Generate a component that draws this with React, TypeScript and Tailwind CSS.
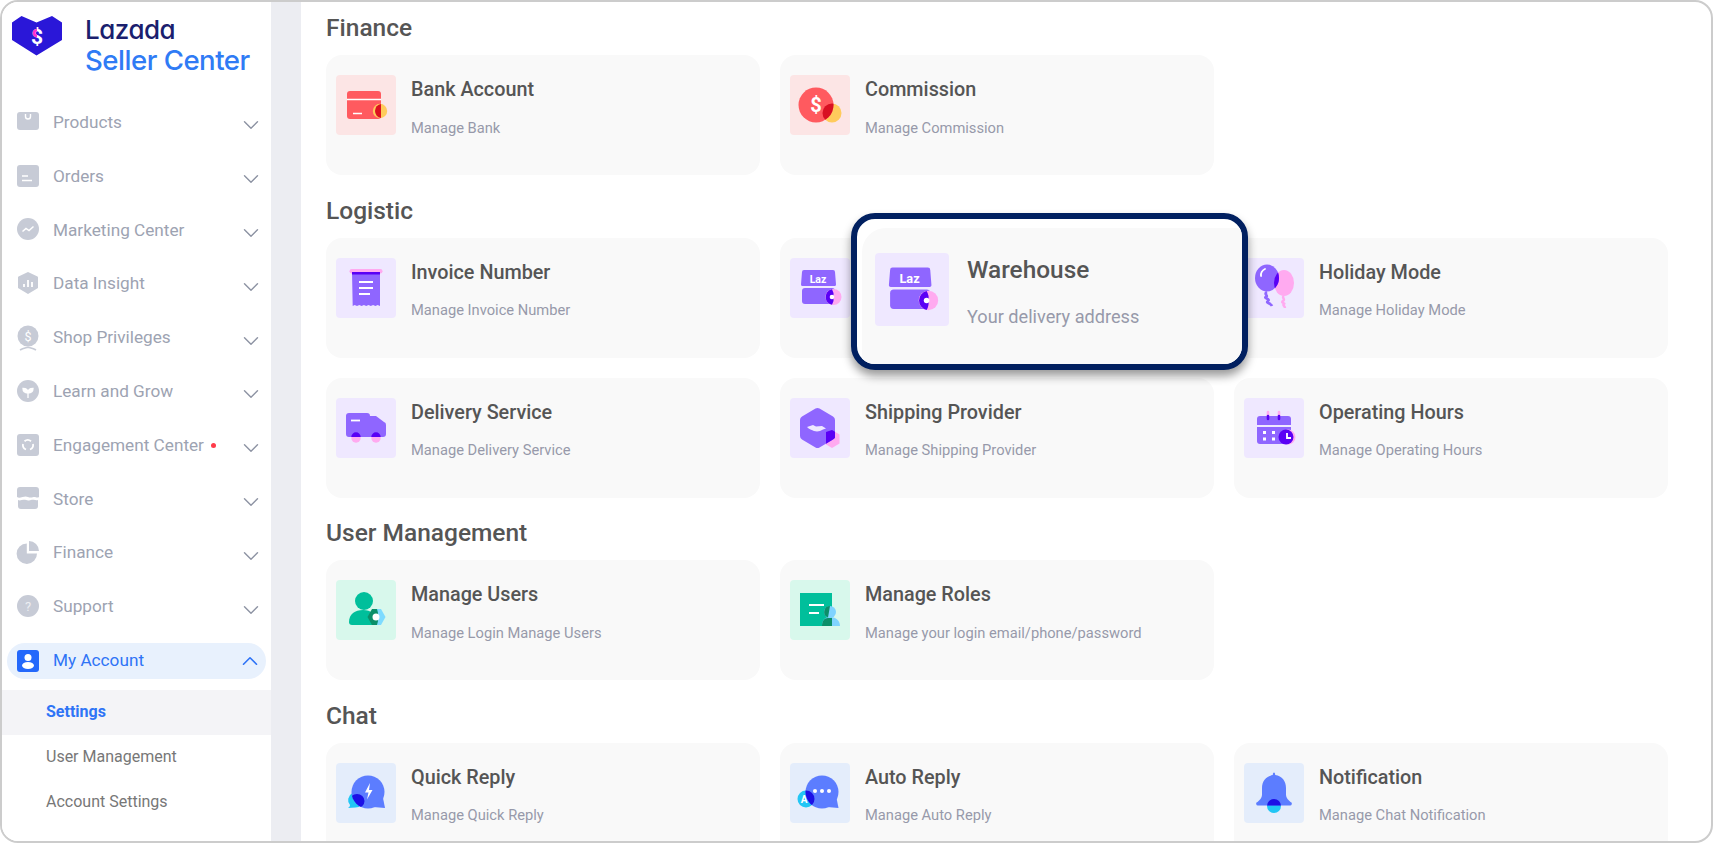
import React from 'react';
import { ChevronDown, ChevronUp } from 'lucide-react';

const PURPLE = '#8f66ff';
const PINK = '#ffaaf0';
const DEEP = '#5a00f5';
const BLUE = '#5c7dff';
const CYAN = '#22c6f5';
const NAVY = '#1c10e6';
const GREEN = '#00bf9b';

/* ---------- sidebar icons ---------- */
const GRAY = '#c7cbd6';

const navIcons: Record<string, React.ReactNode> = {
  products: (
    <>
      <rect x="0" y="1" width="22" height="18" rx="3" fill={GRAY} />
      <path d="M8.500 3v2.500a2.500 2.500 0 0 0 5 0V3" fill="none" stroke="#fff" strokeWidth="1.400" />
    </>
  ),
  orders: (
    <>
      <rect x="0" y="0" width="22" height="22" rx="3" fill={GRAY} />
      <path d="M5 11h6M5 15.500h10" stroke="#fff" strokeWidth="1.600" />
    </>
  ),
  marketing: (
    <>
      <circle cx="11" cy="11" r="11" fill={GRAY} />
      <path d="M5.500 13.500l3.500-3 3 2 4.500-4" fill="none" stroke="#fff" strokeWidth="1.500" />
    </>
  ),
  data: (
    <>
      <path d="M11 0l9.500 4.500a1 1 0 0 1 .5 1V16l-10 6-10-6V5.500a1 1 0 0 1 .5-1z" fill={GRAY} />
      <path d="M7 15v-3M11 15V8M15 15v-5" stroke="#fff" strokeWidth="1.800" />
    </>
  ),
  shop: (
    <>
      <circle cx="11" cy="10" r="10.500" fill={GRAY} />
      <text x="11" y="14.500" textAnchor="middle" fontSize="12.500" fontFamily="Roboto, sans-serif" fill="#fff">$</text>
      <path d="M3 24c3-2 5-2 8-2.800 3 .8 5 .8 8 2.800" fill="none" stroke={GRAY} strokeWidth="1.600" />
    </>
  ),
  learn: (
    <>
      <circle cx="11" cy="11" r="11" fill={GRAY} />
      <path d="M11 18v-6M11 13c-3 0-5-1.500-5-4.500 3 0 5 1.500 5 4.500zM11 13c3 0 5-1.500 5-4.500-3 0-5 1.500-5 4.500z" fill="#fff" stroke="#fff" strokeWidth="1.300" />
    </>
  ),
  engagement: (
    <>
      <rect x="0" y="0" width="22" height="22" rx="3" fill={GRAY} />
      <path d="M14 7.200a5 5 0 0 0-6.500 0M6 10a5 5 0 0 0 3 5.500M13 15.500a5 5 0 0 0 3-5.500" fill="none" stroke="#fff" strokeWidth="1.800" />
    </>
  ),
  store: (
    <>
      <path d="M3 0h16a3 3 0 0 1 3 3v7c-2 1.500-3.500-.5-5.500 0s-3.500 1-5.500 0-3.500-.5-5.500 0S2 11.500 0 10V3a3 3 0 0 1 3-3z" fill={GRAY} />
      <path d="M1 13c2 1 3.500 0 5.500-.2s3.500 1 5.500.6 3-1 5-.6 2.500.6 4 .2v6a3 3 0 0 1-3 3H4a3 3 0 0 1-3-3z" fill={GRAY} />
    </>
  ),
  finance: (
    <>
      <path d="M9.800 2.500V12.500H20A10.200 10.200 0 1 1 9.800 2.500z" fill={GRAY} />
      <path d="M12 0a10 10 0 0 1 10 10H12z" fill={GRAY} />
    </>
  ),
  support: (
    <>
      <circle cx="11" cy="11" r="11" fill={GRAY} />
      <text x="11" y="15.500" textAnchor="middle" fontSize="13" fontFamily="Roboto, sans-serif" fill="#eceef2">?</text>
    </>
  ),
  account: (
    <>
      <rect x="0" y="0" width="22" height="22" rx="3" fill="#2468fb" />
      <circle cx="11" cy="7.500" r="3.500" fill="#fff" />
      <ellipse cx="11" cy="15.500" rx="6" ry="3.500" fill="#fff" />
    </>
  ),
};

/* ---------- tile icons, all drawn on a 60 x 60 tile ---------- */
const tileIcons: Record<string, React.ReactNode> = {
  bank: (
    <>
      <rect x="11" y="16" width="34" height="28" rx="3" fill="#ff5a5f" />
      <path d="M11 24.500h34M17 38.500h9" stroke="#fff" strokeWidth="1.500" />
      <circle cx="44" cy="36" r="7.200" fill="#ffcb5c" />
      <path d="M45 28.900a7.200 7.200 0 0 0 0 14.200z" fill="#dc1020" />
    </>
  ),
  commission: (
    <>
      <circle cx="42" cy="38" r="9.500" fill="#ffcb5c" />
      <circle cx="26" cy="30" r="17.500" fill="#ff5a5f" />
      <clipPath id="cm"><circle cx="26" cy="30" r="17.500" /></clipPath>
      <circle cx="42" cy="38" r="9.500" fill="#d81022" clipPath="url(#cm)" />
      <text x="26" y="37" textAnchor="middle" fontSize="20" fontWeight="700" fontFamily="Roboto, sans-serif" fill="#fff">$</text>
    </>
  ),
  invoice: (
    <>
      <rect x="13.500" y="11" width="33" height="4.500" rx="2.200" fill={PINK} />
      <path d="M16 14h28v34l-2.300-1-2.300 1-2.300-1-2.300 1-2.300-1-2.300 1-2.300-1-2.300 1-2.300-1-2.300 1-2.300-1-2 1z" fill={PURPLE} />
      <rect x="16" y="14" width="28" height="2.500" fill={DEEP} />
      <path d="M23 24h14M23 30h14M23 36h11" stroke="#fff" strokeWidth="1.800" />
    </>
  ),
  warehouse: (
    <>
      <path d="M14 12h29a2 2 0 0 1 2 2l1 12.500a1.500 1.500 0 0 1-1.500 1.500h-32a1.500 1.500 0 0 1-1.500-1.500L12 14a2 2 0 0 1 2-2z" fill={PURPLE} />
      <text x="28" y="25" textAnchor="middle" fontSize="10.500" fontWeight="700" fontFamily="Roboto, sans-serif" fill="#fff">Laz</text>
      <rect x="12" y="30" width="33" height="16" rx="3" fill={PURPLE} />
      <circle cx="43.500" cy="39" r="8" fill={PINK} />
      <path d="M42 31.200a8 8 0 0 0 0 15.600 11 11 0 0 0 1.500-7.800 11 11 0 0 0-1.500-7.800z" fill={DEEP} />
      <circle cx="42" cy="39" r="2.300" fill="#fff" />
    </>
  ),
  holiday: (
    <>
      <ellipse cx="40" cy="25" rx="10" ry="13" fill={PINK} />
      <path d="M40 38c-3 2 2 3-1 5s3 2 1 3 1 2 1 4" fill="none" stroke={PINK} strokeWidth="2.400" />
      <ellipse cx="23" cy="20" rx="12" ry="13.500" fill={PURPLE} />
      <clipPath id="hl"><ellipse cx="23" cy="20" rx="12" ry="13.500" /></clipPath>
      <ellipse cx="40" cy="25" rx="10" ry="13" fill={DEEP} clipPath="url(#hl)" />
      <path d="M23 34c-4 2 2 4-1 5s5 2 2 4 3 2 4 5" fill="none" stroke={PURPLE} strokeWidth="2.600" />
      <path d="M17 18a7 7 0 0 1 4-7" fill="none" stroke="#fff" strokeWidth="1.800" strokeLinecap="round" />
    </>
  ),
  delivery: (
    <>
      <circle cx="20" cy="40" r="4.700" fill={PINK} />
      <circle cx="40" cy="40" r="4.700" fill={PINK} />
      <path d="M13 15h18a3 3 0 0 1 3 3h6l8 6a3 3 0 0 1 2 3v9a3 3 0 0 1-3 3H13a3 3 0 0 1-3-3V18a3 3 0 0 1 3-3z" fill={PURPLE} />
      <path d="M15.300 39a4.700 4.700 0 0 1 9.400 0zM35.300 39a4.700 4.700 0 0 1 9.400 0z" fill={DEEP} />
      <path d="M15 22.500h9" stroke="#fff" strokeWidth="1.800" />
    </>
  ),
  shipping: (
    <>
      <path d="M42 32l7.500 4.500v9L42 50l-7.500-4.500v-9z" fill={PINK} />
      <path d="M25.500 10.500a4 4 0 0 1 4 0l13.500 8a4 4 0 0 1 2 3.500v16a4 4 0 0 1-2 3.500l-13.500 8a4 4 0 0 1-4 0l-13.500-8a4 4 0 0 1-2-3.500V22a4 4 0 0 1 2-3.500z" fill={PURPLE} />
      <path d="M36 34l6-2 3 1.800v6a4 4 0 0 1-2 1.700l-7 4.200z" fill={DEEP} />
      <path d="M17 29l6-2 3 1.500 6-.5 4 2.500-3 1c-3 2-6 2.500-9 1.500-2-1-5-1.500-7-4z" fill="#fff" opacity="0.85" />
    </>
  ),
  hours: (
    <>
      <path d="M13 27v-6a3 3 0 0 1 3-3h28a3 3 0 0 1 3 3v6z" fill={PURPLE} />
      <path d="M13 29h34v14a3 3 0 0 1-3 3H16a3 3 0 0 1-3-3z" fill={PURPLE} />
      <path d="M24 14v4M35 14v4" stroke={PINK} strokeWidth="2.600" strokeLinecap="round" />
      <path d="M24 18v3M35 18v3" stroke={DEEP} strokeWidth="2.600" strokeLinecap="round" />
      <path d="M19 33h3v3h-3zM28 33h3v3h-3zM19 39.500h3v3h-3zM28 39.500h3v3h-3z" fill="#fff" />
      <circle cx="44" cy="39" r="7.500" fill={PINK} />
      <circle cx="42" cy="39" r="7.500" fill={DEEP} />
      <path d="M43 35v5h4" fill="none" stroke="#fff" strokeWidth="1.800" />
    </>
  ),
  users: (
    <>
      <circle cx="28" cy="21" r="9" fill={GREEN} />
      <path d="M13 42c0-8 6-12 14-12s13 4 13 12a3 3 0 0 1-3 3H16a3 3 0 0 1-3-3z" fill={GREEN} />
      <path d="M45 29l4.500 8-4.500 8h-8v-16z" fill="#7edbff" />
      <path d="M41 29h-5l-4.500 8 4.500 8h5l1-4v-8z" fill="#0b8f69" />
      <circle cx="40" cy="37" r="3.500" fill="#fff" />
    </>
  ),
  roles: (
    <>
      <rect x="10" y="13" width="32" height="33" fill={GREEN} />
      <path d="M19 25h15M19 33h10" stroke="#fff" strokeWidth="2" />
      <circle cx="40" cy="32" r="6" fill="#7fd3ff" />
      <path d="M32 46c0-6 3-9 8-9s10 3 10 9z" fill="#7fd3ff" />
      <path d="M42 26.500v11.500h-4c-4 0-6 3-6 8h10zM40 26a6 6 0 0 0-2 11.600" fill="#0b8f69" />
    </>
  ),
  quick: (
    <>
      <path d="M12 45c2-1 2-3 2-3a7.500 7.500 0 1 1 5.500 2.500z" fill={CYAN} />
      <circle cx="32" cy="29" r="16.500" fill={BLUE} />
      <path d="M37 44l12 1-2-10z" fill={BLUE} />
      <clipPath id="qr"><circle cx="32" cy="29" r="16.500" /></clipPath>
      <ellipse cx="21" cy="38" rx="7.500" ry="7" fill={NAVY} clipPath="url(#qr)" />
      <path d="M34 20l-5 9.500h3.500l-1.500 7 5.500-9.500h-3.500z" fill="#fff" />
    </>
  ),
  auto: (
    <>
      <circle cx="16" cy="36" r="8.500" fill={CYAN} />
      <circle cx="32" cy="29" r="16.500" fill={BLUE} />
      <path d="M37 44l11.500 1-2-10z" fill={BLUE} />
      <clipPath id="ar"><circle cx="32" cy="29" r="16.500" /></clipPath>
      <circle cx="16" cy="36" r="8.500" fill={NAVY} clipPath="url(#ar)" />
      <circle cx="25" cy="28" r="2" fill="#fff" />
      <circle cx="32" cy="28" r="2" fill="#fff" />
      <circle cx="39" cy="28" r="2" fill="#fff" />
      <text x="14" y="40" textAnchor="middle" fontSize="10" fontWeight="700" fontFamily="Roboto, sans-serif" fill="#fff">A</text>
    </>
  ),
  bell: (
    <>
      <circle cx="30" cy="43" r="7" fill={CYAN} />
      <path d="M30 9.500c.8 0 1.200 1 1.200 2.500 7 1.200 10.800 6 10.800 13v7c0 3 2.500 5 4.500 7a1.800 1.800 0 0 1-1 3.500H14.500a1.800 1.800 0 0 1-1-3.500c2-2 4.500-4 4.500-7v-7c0-7 3.800-11.800 10.800-13 0-1.500 .4-2.500 1.200-2.500z" fill={BLUE} />
      <clipPath id="bl"><rect x="20" y="30" width="20" height="12.500" /></clipPath>
      <circle cx="30" cy="43" r="7" fill={NAVY} clipPath="url(#bl)" />
    </>
  ),
};

const navItems = [
  { label: 'Products', icon: 'products' },
  { label: 'Orders', icon: 'orders' },
  { label: 'Marketing Center', icon: 'marketing' },
  { label: 'Data Insight', icon: 'data' },
  { label: 'Shop Privileges', icon: 'shop' },
  { label: 'Learn and Grow', icon: 'learn' },
  { label: 'Engagement Center', icon: 'engagement', dot: true },
  { label: 'Store', icon: 'store' },
  { label: 'Finance', icon: 'finance' },
  { label: 'Support', icon: 'support' },
];

type Tile = { title?: string; sub?: string; icon: string; tint: string };
const RED_TINT = 'bg-[#fce5e5]';
const PURPLE_TINT = 'bg-[#efe8ff]';
const GREEN_TINT = 'bg-[#d8f8ec]';
const BLUE_TINT = 'bg-[#e4edfb]';

const sections: { name: string; cards: Tile[] }[] = [
  {
    name: 'Finance',
    cards: [
      { title: 'Bank Account', sub: 'Manage Bank', icon: 'bank', tint: RED_TINT },
      { title: 'Commission', sub: 'Manage Commission', icon: 'commission', tint: RED_TINT },
    ],
  },
  {
    name: 'Logistic',
    cards: [
      { title: 'Invoice Number', sub: 'Manage Invoice Number', icon: 'invoice', tint: PURPLE_TINT },
      // its text is covered by the callout below
      { icon: 'warehouse', tint: PURPLE_TINT },
      { title: 'Holiday Mode', sub: 'Manage Holiday Mode', icon: 'holiday', tint: PURPLE_TINT },
      { title: 'Delivery Service', sub: 'Manage Delivery Service', icon: 'delivery', tint: PURPLE_TINT },
      { title: 'Shipping Provider', sub: 'Manage Shipping Provider', icon: 'shipping', tint: PURPLE_TINT },
      { title: 'Operating Hours', sub: 'Manage Operating Hours', icon: 'hours', tint: PURPLE_TINT },
    ],
  },
  {
    name: 'User Management',
    cards: [
      { title: 'Manage Users', sub: 'Manage Login Manage Users', icon: 'users', tint: GREEN_TINT },
      { title: 'Manage Roles', sub: 'Manage your login email/phone/password', icon: 'roles', tint: GREEN_TINT },
    ],
  },
  {
    name: 'Chat',
    cards: [
      { title: 'Quick Reply', sub: 'Manage Quick Reply', icon: 'quick', tint: BLUE_TINT },
      { title: 'Auto Reply', sub: 'Manage Auto Reply', icon: 'auto', tint: BLUE_TINT },
      { title: 'Notification', sub: 'Manage Chat Notification', icon: 'bell', tint: BLUE_TINT },
    ],
  },
];

const Card = ({ card }: { card: Tile }) => (
  <div className="flex h-[120px] rounded-[16px] bg-[#f9f9f9] pl-[10px] pt-[20px]">
    <div className={`h-[60px] w-[60px] shrink-0 rounded-[4px] ${card.tint}`}>
      <svg viewBox="0 0 60 60" className="h-full w-full">{tileIcons[card.icon]}</svg>
    </div>
    {card.title && (
      <div className="ml-[15px]">
        <div className="mt-[3px] text-[19.800px] leading-[24px] font-medium text-[#555555]">{card.title}</div>
        <div className="mt-[15.500px] text-[14.700px] leading-[20px] text-[#9799aa]">{card.sub}</div>
      </div>
    )}
  </div>
);

const Sidebar = () => (
  <aside className="h-full w-[269px] shrink-0 overflow-hidden bg-white">
    <div className="flex h-[94px] pt-[14px]">
      <svg viewBox="0 0 50 40" className="ml-[10px] h-[40px] w-[50px]">
        <path d="M0 6.500L9.500 0 24.500 6.500 40 0 50 6.500V24L24.500 39.500 0 24z" fill="#2a17d8" />
        <text x="25" y="28" textAnchor="middle" fontSize="21" fontWeight="700" fontFamily="Roboto, sans-serif" fill="#fff">$</text>
        <clipPath id="lg"><rect x="17" y="10" width="8" height="12" /></clipPath>
        <text x="25" y="28" textAnchor="middle" fontSize="21" fontWeight="700" fontFamily="Roboto, sans-serif" fill="#ff2fd0" clipPath="url(#lg)">$</text>
      </svg>
      <div className="ml-[23px] font-[Inter] font-medium tracking-[-0.5px] [font-feature-settings:'cv11']">
        <div className="text-[26px] leading-[28px] text-[#1b1f6e]">Lazada</div>
        <div className="mt-[1px] text-[27.600px] leading-[30px] text-[#2f7bf5]">Seller Center</div>
      </div>
    </div>

    {navItems.map(item => (
      <div key={item.label} className="flex h-[53.800px] items-center pl-[15px] pr-[7px]">
        <svg viewBox="0 0 22 24" className="h-[24px] w-[22px] shrink-0 overflow-visible">{navIcons[item.icon]}</svg>
        <span className="ml-[14px] text-[17.200px] text-[#9da3b2]">{item.label}</span>
        {item.dot && <span className="ml-[7px] h-[5px] w-[5px] rounded-full bg-[#ff3b4a]" />}
        <ChevronDown size={26} strokeWidth={1.300} className="ml-auto mt-[5px] shrink-0 text-[#8d93a3]" />
      </div>
    ))}

    <div className="flex h-[53.800px] items-center">
      <div className="mx-[5px] flex h-[36px] w-[261px] items-center rounded-full bg-[#e8f1fd] pl-[10px] pr-[3px]">
        <svg viewBox="0 0 22 22" className="h-[22px] w-[22px] shrink-0">{navIcons.account}</svg>
        <span className="ml-[14px] text-[17.200px] text-[#2f74f6]">My Account</span>
        <ChevronUp size={26} strokeWidth={1.500} className="ml-auto shrink-0 text-[#2f74f6]" />
      </div>
    </div>

    <div className="mt-[2px] flex h-[45px] items-center bg-[#f4f4f7] pl-[44px] text-[16px] font-bold text-[#2f74f6]">Settings</div>
    <div className="flex h-[45px] items-center pl-[44px] text-[16px] text-[#777777]">User Management</div>
    <div className="flex h-[45px] items-center pl-[44px] text-[16px] text-[#777777]">Account Settings</div>
  </aside>
);

export default function App() {
  return (
    <div className="relative flex h-[843px] w-[1713px] overflow-hidden rounded-[18px] border-2 border-[#cccccc] bg-white font-[Roboto,sans-serif]">
      <Sidebar />
      <div className="w-[30px] shrink-0 bg-[#ecedf2]" />
      <main className="mt-[-9.500px] min-w-0 flex-1 pl-[25px]">
        {sections.map(section => (
          <section key={section.name}>
            <h2 className="pb-[10px] pt-[18.500px] text-[24.500px] leading-[34px] font-medium text-[#555555]">{section.name}</h2>
            <div className="grid w-[1342px] grid-cols-3 gap-5">
              {section.cards.map(card => (
                <Card key={card.icon} card={card} />
              ))}
            </div>
          </section>
        ))}
      </main>

      {/* callout over the warehouse card */}
      <div className="absolute left-[849px] top-[211px] h-[157px] w-[397px] overflow-hidden rounded-[24px] border-[6px] border-[#012060] bg-white pl-[5px] pt-[9px] shadow-[0_6px_10px_rgba(0,0,0,0.4)]">
        <div className="flex h-full rounded-tl-[24px] bg-[#f9f9f9] pl-[13px] pt-[25px]">
          <div className="h-[73px] w-[74px] shrink-0 rounded-[4px] bg-[#efe8ff]">
            <svg viewBox="0 0 60 60" className="h-full w-full">{tileIcons.warehouse}</svg>
          </div>
          <div className="ml-[18px]">
            <div className="mt-[2px] text-[24.400px] leading-[30px] font-medium text-[#555555]">Warehouse</div>
            <div className="mt-[19.500px] text-[18.150px] leading-[24px] text-[#9799aa]">Your delivery address</div>
          </div>
        </div>
      </div>
    </div>
  );
}
